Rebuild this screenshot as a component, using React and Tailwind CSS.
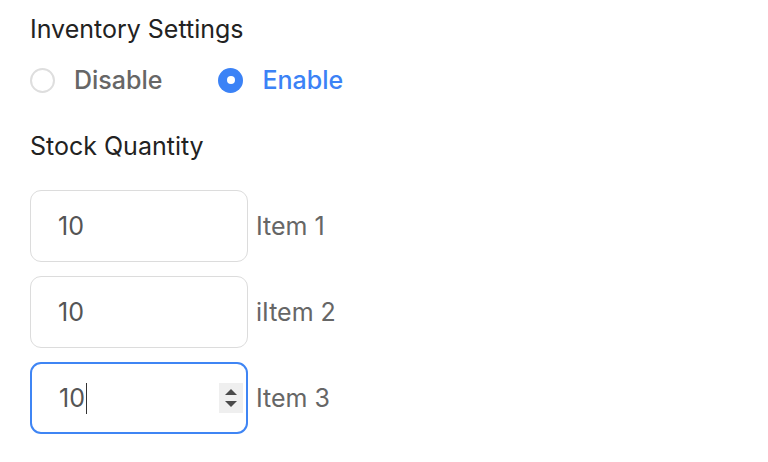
import { useState } from 'react'

const ITEMS = [
  { id: 1, qty: '10', label: 'Item 1' },
  { id: 2, qty: '10', label: 'iItem 2' },
  { id: 3, qty: '10', label: 'Item 3', focused: true },
]

function Radio({ checked, label, onClick }) {
  return (
    <button type="button" onClick={onClick} className="flex items-center gap-[19px]">
      {checked ? (
        <span className="flex h-[25px] w-[25px] items-center justify-center rounded-full bg-[#3b82f6]">
          <span className="h-[8px] w-[8px] rounded-full bg-white" />
        </span>
      ) : (
        <span className="h-[25px] w-[25px] rounded-full border-2 border-[#dedede] bg-white" />
      )}
      <span className={`font-medium ${checked ? 'text-[#3b82f6]' : 'text-[#666666]'}`}>{label}</span>
    </button>
  )
}

function Spinner() {
  // fake number spinner, native one renders differently
  return (
    <div className="absolute right-[3px] top-[19px] flex h-[30px] w-[24px] flex-col items-center justify-center gap-[6px] bg-[#efefef]">
      <span className="h-0 w-0 border-x-[6px] border-b-[6px] border-x-transparent border-b-[#4a4a4a]" />
      <span className="h-0 w-0 border-x-[6px] border-t-[6px] border-x-transparent border-t-[#4a4a4a]" />
    </div>
  )
}

function QtyField({ item }) {
  return (
    <div className="flex items-center gap-[8px]">
      <div
        className={`relative flex h-[72px] w-[218px] items-center rounded-[11px] bg-white pl-[27px] ${
          item.focused ? 'border-2 border-[#3f85f4]' : 'border-[1.5px] border-[#dcdcdc]'
        }`}
      >
        <span className="text-[#555555]">{item.qty}</span>
        {item.focused && <span className="ml-[1px] h-[31px] w-[1.5px] bg-[#333333]" />}
        {item.focused && <Spinner />}
      </div>
      <span className="text-[#666666]">{item.label}</span>
    </div>
  )
}

export default function App() {
  const [enabled, setEnabled] = useState(true)
  return (
    <div
      className="min-h-screen bg-white pl-[30px] pt-[13px] text-[25px] leading-[32px] text-[#222222]"
      style={{ fontFamily: 'Inter, "Liberation Sans", sans-serif' }}
    >
      <h2 className="font-normal">Inventory Settings</h2>
      <div className="mt-[19px] flex items-center gap-[56px]">
        <Radio checked={!enabled} label="Disable" onClick={() => setEnabled(false)} />
        <Radio checked={enabled} label="Enable" onClick={() => setEnabled(true)} />
      </div>
      <h3 className="mt-[34px] font-normal">Stock Quantity</h3>
      <div className="mt-[28px] flex flex-col gap-[14px]">
        {ITEMS.map((item) => (
          <QtyField key={item.id} item={item} />
        ))}
      </div>
    </div>
  )
}
